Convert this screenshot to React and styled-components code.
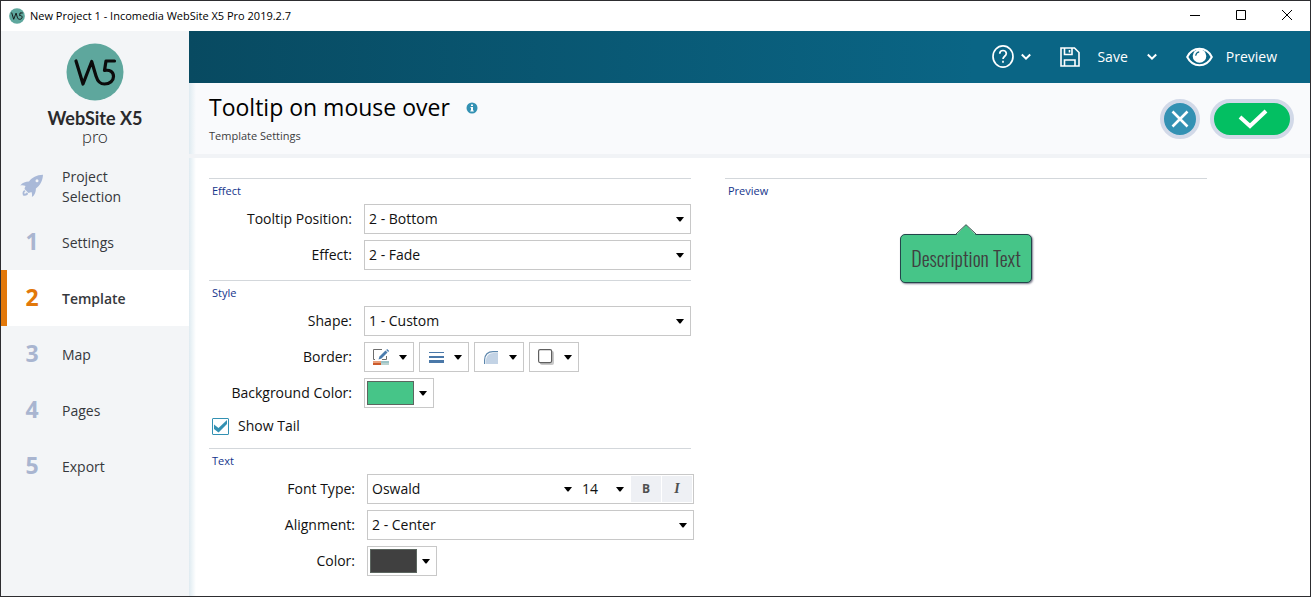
import React, { useState } from 'react'
import styled, { createGlobalStyle, css } from 'styled-components'

const steps = [
  { id: 'settings', mark: '1', label: 'Settings' },
  { id: 'template', mark: '2', label: 'Template' },
  { id: 'map', mark: '3', label: 'Map' },
  { id: 'pages', mark: '4', label: 'Pages' },
  { id: 'export', mark: '5', label: 'Export' }
]

const LogoMark = ({ size }) => (
  <svg width={size} height={size} viewBox="0 0 58 58" aria-hidden="true">
    <circle cx="29" cy="29" r="28.5" fill="#5ea79d" />
    <path
      d="M10 18 L17 41 L25.700 18.500 L30 33 C32 39.500 34.500 41 38.500 41 C44 41 47.500 37.500 47.500 33.500 C47.500 29 44 26.500 38.500 27.500 L40 18 H48.500"
      fill="none" stroke="#0b0b0b" strokeWidth="3.2" strokeLinecap="round" strokeLinejoin="round"
    />
  </svg>
)

const RocketIcon = () => (
  <svg width="24" height="26" viewBox="0 -2 24 26" fill="#a9b9d8" aria-hidden="true">
    <path fillRule="evenodd" d="M23 .8C16.500 1 12 3.500 9 7.500 5.500 7.500 2.500 8.500.3 11.500c2-.3 3.700-.2 5.200.4-.5 1-.8 2-1 3l4 4c1-.2 2-.5 3-1 .6 1.500.7 3.200.4 5.200 3-2.200 4-5.200 4-8.700C20 11.500 22.700 7 23 .8zM17 5.300a1.500 1.500 0 1 1 0 3 1.500 1.500 0 0 1 0-3z" />
    <path d="M4.700 16.200c-2 .3-2.700 2.300-1.700 5.300 3 .6 5-.2 5-2l-1.200-1.200c-.3 1-1.200 1.500-2.500 1.300-.2-1.200.3-2 1.400-2.400z" />
  </svg>
)

const HelpIcon = () => (
  <svg width="22" height="24" viewBox="0 0 22 24" fill="none" stroke="#fff" strokeWidth="1.7" aria-hidden="true">
    <ellipse cx="11" cy="11.500" rx="10" ry="10.6" />
    <path d="M7.700 8.700C7.800 6.500 9.100 5.500 11 5.500s3.300 1.200 3.300 3c0 2.700-3.300 2.800-3.300 5.600" />
    <path d="M11 15.800v2" />
  </svg>
)

const ChevronIcon = () => (
  <svg width="10" height="8" viewBox="0 0 10 8" fill="none" stroke="#fff" strokeWidth="2" aria-hidden="true">
    <path d="M.8 1.500 5 5.700 9.200 1.500" />
  </svg>
)

const SaveIcon = () => (
  <svg width="20" height="20" viewBox="0 0 20 20" fill="none" stroke="#fff" strokeWidth="1.6" aria-hidden="true">
    <path d="M1 1h13.500L19 5.500V19H1z" />
    <path d="M4.500 1v6.500h7.500V1M9.500 3v2.500M4.500 19v-6h10.500v6" />
  </svg>
)

const EyeIcon = () => (
  <svg width="27" height="20" viewBox="0 0 27 20" aria-hidden="true">
    <path d="M1.200 10C4 4.500 8.500 1.800 13.500 1.800S23 4.500 25.800 10C23 15.500 18.500 18.200 13.500 18.200S4 15.500 1.200 10z" fill="none" stroke="#fff" strokeWidth="2" />
    <circle cx="13.500" cy="9" r="6.800" fill="#fff" />
    <path d="M9.700 8.700c.2-2.200 1.400-3.500 3.500-3.900" fill="none" stroke="#0a6585" strokeWidth="1.200" />
  </svg>
)

const InfoIcon = () => (
  <svg width="12" height="14" viewBox="0 -2 12 14" aria-hidden="true">
    <circle cx="6" cy="6" r="5.500" fill="#3391b3" />
    <path d="M5 2.500h2v1.500H5zM4.500 5H7v3.500h.8v1H4.300v-1H5V6h-.5z" fill="#fff" />
  </svg>
)

const ArrowIcon = () => (
  <svg width="8" height="5" viewBox="0 0 8 5" aria-hidden="true">
    <path d="M0 0h8L4.500 4.500h-1z" fill="#000" />
  </svg>
)

const BorderColorIcon = () => (
  <svg width="17" height="17" viewBox="0 0 17 17" aria-hidden="true">
    <path d="M9 .5H.5v10H2M13.500 7v3.500H9" fill="none" stroke="#6d6d6d" />
    <path d="M5.500 10.500 6.500 7.500 12.500 1.500 14.500 3.500 8.500 9.500z" fill="#4a7cae" />
    <path d="M13.200.9 14.200 0l2 2-1 1z" fill="#4a7cae" />
    <path d="M0 12h8v2H0z" fill="#e9a07c" />
    <path d="M8 12h8v2H8z" fill="#9cc3c6" />
    <path d="M0 14h8v2H0z" fill="#cc5a2b" />
    <path d="M8 14h8v2H8z" fill="#b9d2cf" />
  </svg>
)

const BorderWidthIcon = () => (
  <svg width="16" height="17" viewBox="-1 0 16 17" fill="#4a78a8" aria-hidden="true">
    <path d="M0 3h15v1H0zM0 7h15v2H0zM0 11h15v3H0z" />
  </svg>
)

const RadiusIcon = () => (
  <svg width="16" height="17" viewBox="-1 0 16 17" aria-hidden="true">
    <path d="M.6 15V11C.6 5.500 4 2.600 9 2.600h5" fill="none" stroke="#5d87ad" strokeWidth="1.200" />
    <path d="M2 15V11.500C2 7 5 4 9.500 4H14v11z" fill="#c3d3e5" />
  </svg>
)

const ShadowIcon = () => (
  <svg width="17" height="17" viewBox="0 0 17 17" aria-hidden="true">
    <rect x="2" y="2" width="14" height="14" rx="2" fill="#c9c9c9" />
    <rect x=".6" y=".6" width="13" height="13" rx="1.500" fill="#fff" stroke="#5f5f5f" strokeWidth="1.200" />
  </svg>
)

const SelectBox = ({ id, value, label, bare, width }) => (
  <SelectWrap $bare={bare} $width={width}>
    <Select id={id} defaultValue={value} aria-label={label}>
      <option>{value}</option>
    </Select>
    <ArrowSlot><ArrowIcon /></ArrowSlot>
  </SelectWrap>
)

const App = () => {
  const [active, setActive] = useState('template')
  const [tail, setTail] = useState(true)

  return (
    <Window>
      <GlobalStyle />
      <TitleBar>
        <LogoMark size={16} />
        <WindowTitle>New Project 1 - Incomedia WebSite X5 Pro 2019.2.7</WindowTitle>
        <WindowButton aria-label="Minimize">
          <svg width="12" height="12"><path d="M1 5.500h10" stroke="#000" /></svg>
        </WindowButton>
        <WindowButton aria-label="Maximize">
          <svg width="12" height="12"><path d="M1.500.5h9v9h-9z" stroke="#000" fill="none" /></svg>
        </WindowButton>
        <WindowButton aria-label="Close">
          <svg width="12" height="12"><path d="M1 0l10 10M11 0 1 10" stroke="#000" /></svg>
        </WindowButton>
      </TitleBar>
      <Shell>
        <Sidebar>
          <Brand>
            <LogoMark size={58} />
            <BrandName>WebSite X5</BrandName>
            <BrandEdition>pro</BrandEdition>
          </Brand>
          <nav>
            <Step $active={active === 'project'} onClick={() => setActive('project')}>
              <StepMark><RocketIcon /></StepMark>
              <StepLabel>Project Selection</StepLabel>
            </Step>
            {steps.map((step) => (
              <Step key={step.id} $active={active === step.id} onClick={() => setActive(step.id)}>
                <StepMark>{step.mark}</StepMark>
                <StepLabel>{step.label}</StepLabel>
              </Step>
            ))}
          </nav>
        </Sidebar>
        <Main>
          <Toolbar>
            <ToolButton $gap={7} aria-label="Help"><HelpIcon /><ChevronIcon /></ToolButton>
            <ToolGroup>
              <ToolButton $gap={17}><SaveIcon />Save</ToolButton>
              <ToolButton aria-label="Save options"><ChevronIcon /></ToolButton>
            </ToolGroup>
            <ToolButton $gap={13}><EyeIcon />Preview</ToolButton>
          </Toolbar>
          <Header>
            <div>
              <Heading>Tooltip on mouse over <InfoIcon /></Heading>
              <SubHeading>Template Settings</SubHeading>
            </div>
            <Actions>
              <RoundButton $width={40} $color="#3391b3" aria-label="Cancel">
                <svg width="18" height="18"><path d="M1.500 1.500l15 15M16.500 1.500l-15 15" stroke="#fff" strokeWidth="2.600" /></svg>
              </RoundButton>
              <RoundButton $width={84} $color="#03bf62" aria-label="OK">
                <svg width="32" height="20"><path d="M4 8 14 17 30 2" fill="none" stroke="#fff" strokeWidth="4" /></svg>
              </RoundButton>
            </Actions>
          </Header>
          <Content>
            <Form>
              <Section>
                <SectionTitle>Effect</SectionTitle>
                <Row>
                  <Label htmlFor="position">Tooltip Position:</Label>
                  <SelectBox id="position" value="2 - Bottom" />
                </Row>
                <Row>
                  <Label htmlFor="effect">Effect:</Label>
                  <SelectBox id="effect" value="2 - Fade" />
                </Row>
              </Section>
              <Section>
                <SectionTitle>Style</SectionTitle>
                <Row>
                  <Label htmlFor="shape">Shape:</Label>
                  <SelectBox id="shape" value="1 - Custom" />
                </Row>
                <Row>
                  <Label htmlFor="border">Border:</Label>
                  <ButtonGroup>
                    <DropButton id="border" aria-label="Border color"><BorderColorIcon /><ArrowIcon /></DropButton>
                    <DropButton aria-label="Border width"><BorderWidthIcon /><ArrowIcon /></DropButton>
                    <DropButton aria-label="Rounded corners"><RadiusIcon /><ArrowIcon /></DropButton>
                    <DropButton aria-label="Shadow"><ShadowIcon /><ArrowIcon /></DropButton>
                  </ButtonGroup>
                </Row>
                <Row>
                  <Label htmlFor="background">Background Color:</Label>
                  <ColorButton id="background"><Swatch $color="#46c588" /><ArrowIcon /></ColorButton>
                </Row>
                <CheckLabel>
                  <CheckWrap>
                    <CheckInput type="checkbox" checked={tail} onChange={(e) => setTail(e.target.checked)} />
                    {tail && (
                      <CheckMark width="13" height="13" viewBox="0 0 13 13">
                        <path d="M0 4.500 4.500 8 13 0v4L4.500 12.500 0 9z" fill="#3391b3" />
                      </CheckMark>
                    )}
                  </CheckWrap>
                  Show Tail
                </CheckLabel>
              </Section>
              <Section $shifted>
                <SectionTitle>Text</SectionTitle>
                <Row>
                  <Label htmlFor="font">Font Type:</Label>
                  <FontBox>
                    <SelectBox id="font" value="Oswald" bare />
                    <SelectBox label="Font size" value="14" bare width={52} />
                    <StyleButtons>
                      <StyleButton aria-label="Bold">B</StyleButton>
                      <StyleButton $italic aria-label="Italic">I</StyleButton>
                    </StyleButtons>
                  </FontBox>
                </Row>
                <Row>
                  <Label htmlFor="alignment">Alignment:</Label>
                  <SelectBox id="alignment" value="2 - Center" />
                </Row>
                <Row>
                  <Label htmlFor="color">Color:</Label>
                  <ColorButton id="color"><Swatch $color="#404040" /><ArrowIcon /></ColorButton>
                </Row>
              </Section>
            </Form>
            <Section>
              <SectionTitle>Preview</SectionTitle>
              <Stage>
                {tail && (
                  <Tail width="22" height="12" viewBox="0 0 22 12">
                    <path d="M1 11 11 1 21 11V12H1z" fill="#46c588" />
                    <path d="M.5 10.500 11 .7 21.500 10.500" fill="none" stroke="#2b4a45" />
                  </Tail>
                )}
                <Tooltip>Description Text</Tooltip>
              </Stage>
            </Section>
          </Content>
        </Main>
      </Shell>
    </Window>
  )
}

const GlobalStyle = createGlobalStyle`
  * {
    box-sizing: border-box;
  }
  body {
    margin: 0;
    background: #fff;
    color: #111;
    font-family: 'Segoe UI', 'Open Sans', 'Noto Sans', sans-serif;
    font-size: 14px;
    line-height: 20px;
  }
  button, select, input {
    margin: 0;
    padding: 0;
    border: 0;
    background: none;
    color: inherit;
    font: inherit;
  }
  svg {
    display: block;
    flex: none;
  }
`

const edgeShade = css`
  background-image: linear-gradient(90deg, #dfebf1, rgba(223, 235, 241, 0) 7px);
`

const Window = styled.div`
  display: flex;
  flex-direction: column;
  min-height: 100vh;
  border: 1px solid #2d2d30;
`

const TitleBar = styled.header`
  display: flex;
  align-items: center;
  height: 30px;
  padding-left: 8px;
  background: #fff;
`

const WindowTitle = styled.div`
  flex: 1;
  padding-left: 5px;
  font-size: 11px;
  color: #000;
`

const WindowButton = styled.button`
  display: flex;
  align-items: center;
  justify-content: center;
  width: 46px;
  height: 30px;
`

const Shell = styled.div`
  display: flex;
  flex: 1;
`

const Sidebar = styled.aside`
  flex: none;
  width: 188px;
  background: #f3f5f7;
`

const Brand = styled.div`
  display: flex;
  flex-direction: column;
  align-items: center;
  height: 127px;
  padding-top: 12px;
  color: #2a2a2c;
  font-family: Lato, sans-serif;
`

const BrandName = styled.div`
  margin-top: 8px;
  font-size: 18px;
  font-weight: 700;
  line-height: 18px;
`

const BrandEdition = styled.div`
  font-size: 18px;
  font-weight: 300;
  line-height: 18px;
`

const StepMark = styled.span`
  display: flex;
  flex: none;
  justify-content: center;
  width: 50px;
  padding-bottom: 2px;
  color: #a9b5d0;
  font-size: 23px;
  font-weight: 700;
`

const StepLabel = styled.span`
  width: 80px;
  padding-top: 2px;
`

const Step = styled.button`
  display: flex;
  align-items: center;
  gap: 5px;
  width: 100%;
  height: 56px;
  border-left: 6px solid ${(p) => (p.$active ? '#e2780a' : 'transparent')};
  background: ${(p) => (p.$active ? '#fff' : 'none')};
  color: #36383c;
  font-weight: ${(p) => (p.$active ? 600 : 400)};
  text-align: left;
  cursor: pointer;
  ${StepMark} {
    ${(p) => p.$active && 'color: #e2780a;'}
  }
`

const Main = styled.main`
  display: flex;
  flex: 1;
  flex-direction: column;
  min-width: 0;
`

const Toolbar = styled.div`
  display: flex;
  align-items: center;
  justify-content: flex-end;
  gap: 29px;
  height: 52px;
  padding-right: 33px;
  background: linear-gradient(90deg, #084a61, #0a6585 70%);
  color: #fff;
`

const ToolGroup = styled.div`
  display: flex;
  gap: 19px;
`

const ToolButton = styled.button`
  display: flex;
  align-items: center;
  gap: ${(p) => p.$gap || 0}px;
  cursor: pointer;
`

const Header = styled.div`
  display: flex;
  align-items: center;
  justify-content: space-between;
  height: 75px;
  padding: 0 16px 0 20px;
  border-bottom: 4px solid #f1f3f6;
  background-color: #f9fafc;
  ${edgeShade}
`

const Heading = styled.h1`
  display: flex;
  align-items: center;
  gap: 16px;
  margin: 0;
  color: #000;
  font-size: 23px;
  font-weight: 400;
  line-height: 30px;
`

const SubHeading = styled.p`
  margin: 4px 0 0;
  color: #3c3c40;
  font-size: 11px;
  line-height: 20px;
`

const Actions = styled.div`
  display: flex;
  gap: 10px;
`

const RoundButton = styled.button`
  display: flex;
  align-items: center;
  justify-content: center;
  width: ${(p) => p.$width}px;
  height: 40px;
  border: 4px solid #d2d9e8;
  border-radius: 20px;
  background: ${(p) => p.$color};
  cursor: pointer;
`

const Content = styled.div`
  display: grid;
  flex: 1;
  grid-template-columns: minmax(0, 1fr) minmax(0, 1fr);
  gap: 34px;
  padding: 20px 103px 20px 20px;
  background-color: #fff;
  ${edgeShade}
`

const Form = styled.div`
  display: flex;
  flex-direction: column;
  gap: 10px;
`

const Row = styled.div`
  display: flex;
  align-items: center;
  gap: 12px;
  min-height: 30px;
`

const Label = styled.label`
  flex: none;
  width: 143px;
  text-align: right;
`

const Section = styled.section`
  display: flex;
  flex-direction: column;
  gap: 6px;
  border-top: 1px solid #d3d7db;
  ${Row} {
    margin-right: ${(p) => (p.$shifted ? -3 : 0)}px;
  }
  ${Label} {
    width: ${(p) => (p.$shifted ? 146 : 143)}px;
  }
`

const SectionTitle = styled.h2`
  margin: 0 0 -5px;
  padding-left: 3px;
  color: #14358c;
  font-size: 11px;
  font-weight: 400;
  line-height: 24px;
`

const SelectWrap = styled.div`
  display: grid;
  flex: ${(p) => (p.$width ? `0 0 ${p.$width}px` : '1')};
  align-items: center;
  height: ${(p) => (p.$bare ? 28 : 30)}px;
  border: ${(p) => (p.$bare ? '0' : '1px solid #c8c8c8')};
  background: #fff;
`

const Select = styled.select`
  grid-area: 1 / 1;
  width: 100%;
  height: 28px;
  padding-left: 4px;
  appearance: none;
`

const ArrowSlot = styled.span`
  grid-area: 1 / 1;
  justify-self: end;
  margin-right: 6px;
  pointer-events: none;
`

const ButtonGroup = styled.div`
  display: flex;
  gap: 5px;
`

const DropButton = styled.button`
  display: flex;
  align-items: center;
  justify-content: space-between;
  width: 50px;
  height: 30px;
  padding: 0 6px 0 8px;
  border: 1px solid #c8c8c8;
  background: #fff;
`

const ColorButton = styled(DropButton)`
  width: 70px;
  padding-left: 2px;
`

const Swatch = styled.span`
  width: 47px;
  height: 24px;
  border: 1px solid #5c6660;
  background: ${(p) => p.$color};
`

const CheckLabel = styled.label`
  display: flex;
  align-items: center;
  gap: 9px;
  height: 24px;
  padding-left: 3px;
`

const CheckWrap = styled.span`
  display: grid;
  place-items: center;
`

const CheckInput = styled.input`
  grid-area: 1 / 1;
  width: 17px;
  height: 17px;
  border: 1px solid #3391b3;
  border-radius: 1px;
  background: #fff;
  appearance: none;
`

const CheckMark = styled.svg`
  grid-area: 1 / 1;
  pointer-events: none;
`

const FontBox = styled.div`
  display: flex;
  flex: 1;
  align-items: center;
  height: 30px;
  border: 1px solid #c8c8c8;
`

const StyleButtons = styled.div`
  display: flex;
  gap: 1px;
  padding: 1px;
`

const StyleButton = styled.button`
  width: 30px;
  height: 26px;
  background: #eef0f4;
  color: #505050;
  font-family: ${(p) => (p.$italic ? "'Liberation Serif', serif" : 'inherit')};
  font-size: ${(p) => (p.$italic ? 14 : 12)}px;
  font-style: ${(p) => (p.$italic ? 'italic' : 'normal')};
  font-weight: 700;
`

const Stage = styled.div`
  display: flex;
  flex-direction: column;
  align-items: center;
  padding-top: 20px;
`

const Tail = styled.svg`
  z-index: 1;
  margin-bottom: -2px;
`

const Tooltip = styled.div`
  padding: 0 10px;
  border: 1px solid #24454a;
  border-radius: 5px;
  background: #46c588;
  box-shadow: 1px 1px 2px rgba(40, 40, 70, 0.6);
  color: #404040;
  font-family: Oswald, 'Liberation Sans Narrow', 'Open Sans Condensed', sans-serif;
  font-size: 20px;
  font-weight: 300;
  line-height: 47px;
`

export default App
